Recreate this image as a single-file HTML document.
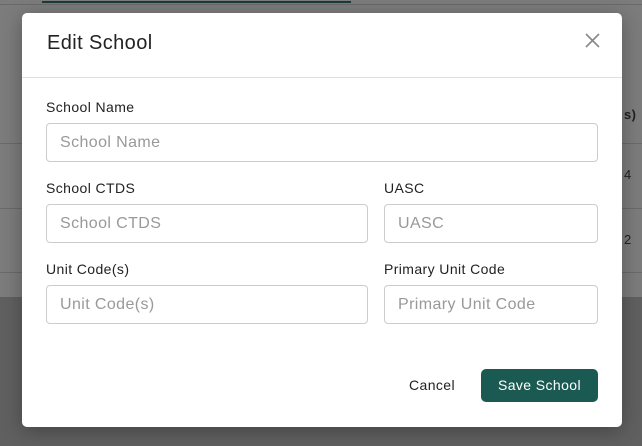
<!DOCTYPE html>
<html><head><style>
body{margin:0;width:642px;height:446px;overflow:hidden;background:#606060;font-family:"Liberation Sans",sans-serif;position:relative;letter-spacing:0.4px}
.bg{position:absolute;left:0;top:0;width:642px;height:297px;background:#7c7c7c}
.ln{position:absolute;left:0;width:642px;height:1px;background:#6a6a6a}
.modal{position:absolute;left:22px;top:13px;width:600px;height:414px;background:#fff;border-radius:5px;box-shadow:0 4px 20px rgba(0,0,0,.3)}
h1{position:absolute;left:25px;top:19px;margin:0;font-weight:normal;font-size:20px;color:#222}
.x{position:absolute;left:563px;top:20px}
.hr{position:absolute;left:0;top:64px;width:600px;height:1px;background:#e0e0e0}
.lb{position:absolute;font-size:14px;color:#222}
.in{position:absolute;box-sizing:border-box;height:39px;border:1px solid #ccc;border-radius:4px;font-size:16px;color:#999;padding:10px 13px}
.cancel{position:absolute;left:387px;top:364px;font-size:14px;color:#222}
.btn{position:absolute;left:459px;top:356px;width:117px;height:33px;background:#1b5a52;border-radius:5px;color:#fff;font-size:14px;text-align:center;line-height:33px}
</style></head><body>
<div class="bg"></div>
<div style="position:absolute;left:42px;top:1px;width:309px;height:2px;background:#1e3a36"></div>
<div class="ln" style="top:4px"></div>
<div class="ln" style="top:143px"></div><div class="ln" style="top:208px"></div><div class="ln" style="top:272px"></div>
<div style="position:absolute;left:624px;top:107px;font-size:13px;font-weight:bold;color:#222">s)</div>
<div style="position:absolute;left:624px;top:167px;font-size:13px;color:#222">4</div>
<div style="position:absolute;left:624px;top:232px;font-size:13px;color:#222">2</div>
<div class="modal">
<h1>Edit School</h1>
<svg class="x" width="15" height="15" viewBox="0 0 15 15"><path d="M1 1L14 14M14 1L1 14" stroke="#888" stroke-width="1.6"/></svg>
<div class="hr"></div>
<div class="lb" style="left:24px;top:86px">School Name</div>
<div class="in" style="left:24px;top:110px;width:552px">School Name</div>
<div class="lb" style="left:24px;top:167px">School CTDS</div>
<div class="in" style="left:24px;top:191px;width:322px">School CTDS</div>
<div class="lb" style="left:362px;top:167px">UASC</div>
<div class="in" style="left:362px;top:191px;width:214px">UASC</div>
<div class="lb" style="left:24px;top:248px">Unit Code(s)</div>
<div class="in" style="left:24px;top:272px;width:322px">Unit Code(s)</div>
<div class="lb" style="left:362px;top:248px">Primary Unit Code</div>
<div class="in" style="left:362px;top:272px;width:214px">Primary Unit Code</div>
<div class="cancel">Cancel</div>
<div class="btn">Save School</div>
</div>
</body></html>
